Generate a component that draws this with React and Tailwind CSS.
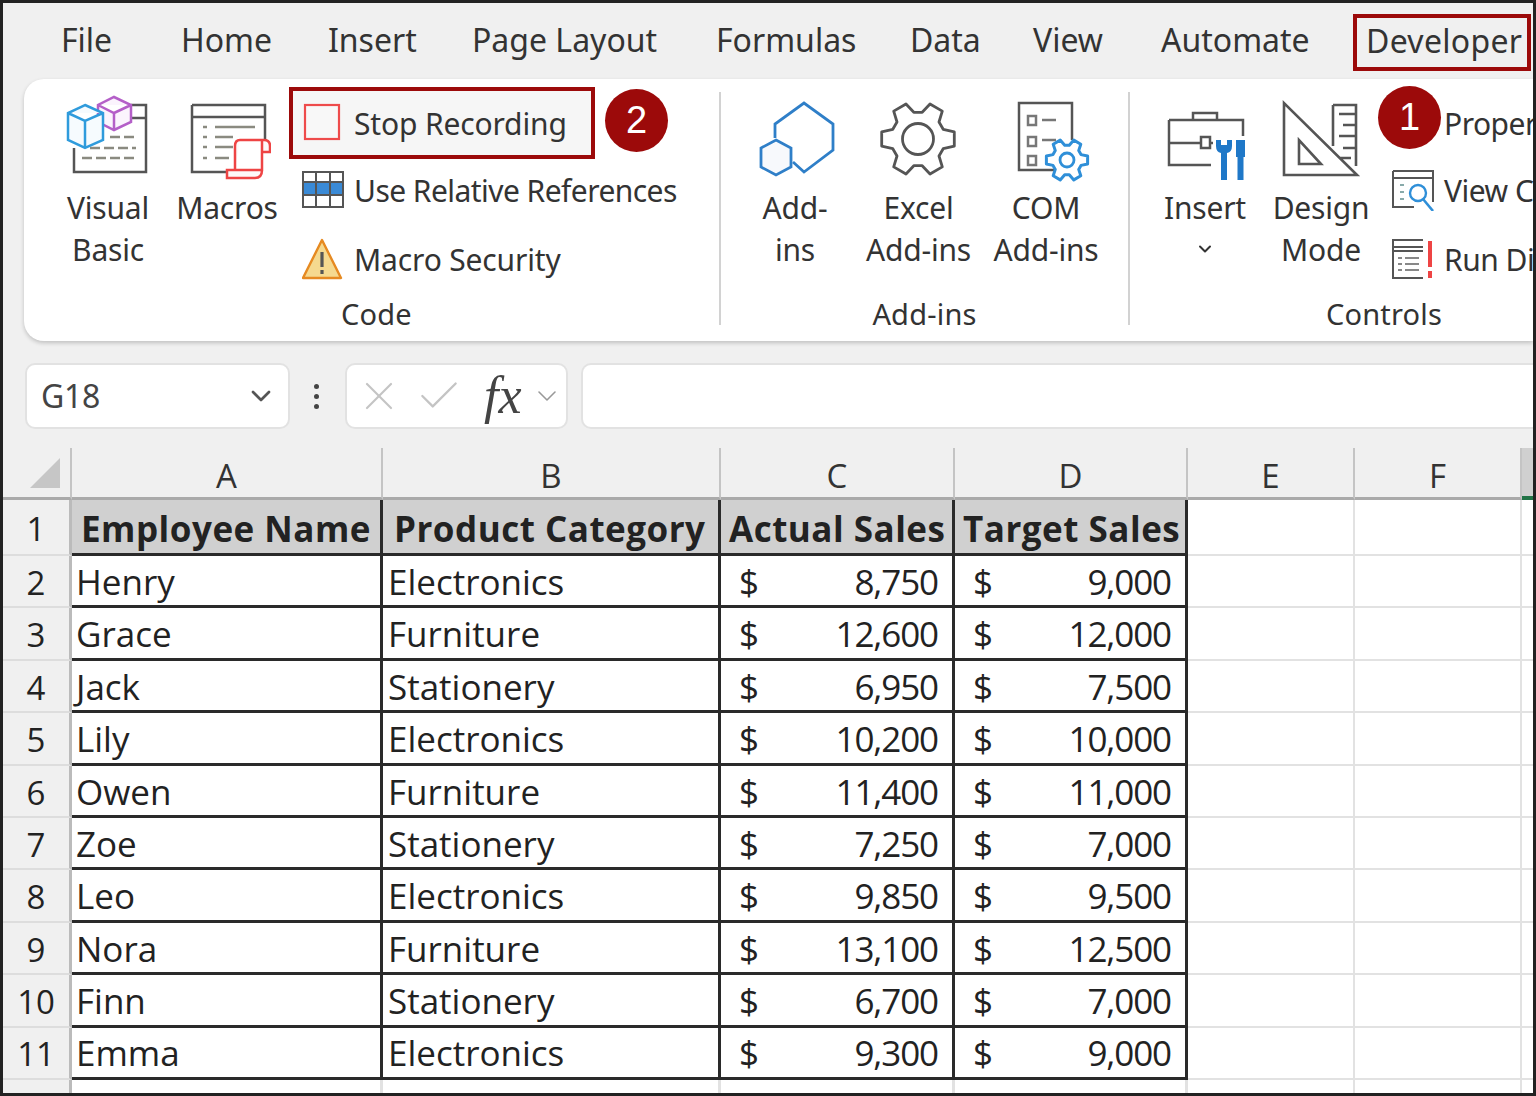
import React from 'react';
import { ChevronDown, X, Check } from 'lucide-react';

const tabs = [
  ['File', 'w-[120px]'], ['Home', 'w-[147px]'], ['Insert', 'w-[144px]'], ['Page Layout', 'w-[244px]'],
  ['Formulas', 'w-[194px]'], ['Data', 'w-[123px]'], ['View', 'w-[128px]'], ['Automate', 'w-[192px]'],
];

const rows = [
  ['Henry', 'Electronics', '8,750', '9,000'],
  ['Grace', 'Furniture', '12,600', '12,000'],
  ['Jack', 'Stationery', '6,950', '7,500'],
  ['Lily', 'Electronics', '10,200', '10,000'],
  ['Owen', 'Furniture', '11,400', '11,000'],
  ['Zoe', 'Stationery', '7,250', '7,000'],
  ['Leo', 'Electronics', '9,850', '9,500'],
  ['Nora', 'Furniture', '13,100', '12,500'],
  ['Finn', 'Stationery', '6,700', '7,000'],
  ['Emma', 'Electronics', '9,300', '9,000'],
];

// six toothed cog, teeth at 30, 90, 150...
function gearPath(cx, cy, R, r) {
  let d = '';
  for (let k = 0; k < 6; k++) {
    const a = 30 + k * 60;
    [[a - 21, r], [a - 11, R], [a + 11, R], [a + 21, r]].forEach(([deg, rad], i) => {
      const t = (deg * Math.PI) / 180;
      const x = (cx + rad * Math.sin(t)).toFixed(1);
      const y = (cy - rad * Math.cos(t)).toFixed(1);
      d += `${k === 0 && i === 0 ? 'M' : 'L'}${x} ${y}`;
    });
  }
  return d + 'Z';
}

function Big({ w, icon, lines }) {
  return (
    <div className={`flex flex-col items-center ${w}`}>
      <div className="mt-[15px] mb-[5px] h-[88px] w-[88px]">{icon}</div>
      {lines.map((l, i) => (
        <div key={i} className="h-[42px] leading-[42px] whitespace-nowrap text-[30px] tracking-[-0.2px]">{l}</div>
      ))}
    </div>
  );
}

function Small({ icon, text, h, className = '' }) {
  return (
    <div className={`flex items-center gap-[10px] whitespace-nowrap ${h} ${className}`}>
      <div className="w-[42px] h-[42px] shrink-0">{icon}</div>
      <span>{text}</span>
    </div>
  );
}

const VisualBasicIcon = (
  <svg viewBox="0 0 88 88" className="w-full h-full" fill="none" strokeWidth="2.5">
    <path d="M10 54V78H82V11H67M67 24H82" stroke="#555" />
    <path d="M46 43H72M26 54H72M18 64H72" stroke="#8a8a80" strokeDasharray="10 4" />
    <path d="M50 3L67 11V28L50 36L34 28V11ZM34 11L50 19L67 11M50 19V36" stroke="#b45fc8" fill="#fbf4fd" />
    <path d="M21 11L39 19V46L21 54L4 46V19ZM4 19L21 27L39 19M21 27V54" stroke="#2f9bdc" fill="#f6fbfe" />
  </svg>
);

const MacrosIcon = (
  <svg viewBox="0 0 88 88" className="w-full h-full" fill="none" strokeWidth="2.5">
    <path d="M9 11H82V58M9 11V78H50M9 23H82" stroke="#555" />
    <path d="M20 33H24M32 33H72M20 43H24M32 43H50M20 53H24M32 53H50M20 64H24M32 64H46" stroke="#8a8a80" />
    <path d="M57 46H81Q87 46 87 52V58H79V46M57 46Q52 46 52 52V76M79 58V76H44V84H72Q79 84 79 76" stroke="#ee4444" fill="#fdf8f8" />
  </svg>
);

const AddinsIcon = (
  <svg viewBox="0 0 88 88" className="w-full h-full" fill="none" stroke="#2f7fc8" strokeWidth="2.8">
    <path d="M24 44V30L53 9L82 30V56L53 78L42 68" />
    <path d="M25 46L40 54V73L25 81L10 73V54Z" fill="#f7f9fc" />
  </svg>
);

const ExcelAddinIcon = (
  <svg viewBox="0 0 88 88" className="w-full h-full" fill="none" stroke="#555" strokeWidth="2.8">
    <path d={gearPath(43, 45, 37, 27)} strokeLinejoin="round" />
    <circle cx="43" cy="45" r="15.5" />
  </svg>
);

const ComIcon = (
  <svg viewBox="0 0 88 88" className="w-full h-full" fill="none" strokeWidth="2.5">
    <path d="M52 76H17V9H70V46" stroke="#555" />
    <path d="M26 22H34V31H26ZM26 43H34V52H26ZM26 62H34V71H26Z" stroke="#777" />
    <path d="M40 26H54M40 46H54" stroke="#777" />
    <path d={gearPath(65, 66, 21, 15)} fill="white" stroke="#2f8fd8" strokeWidth="3" strokeLinejoin="round" />
    <circle cx="65" cy="66" r="7" stroke="#2f8fd8" strokeWidth="2.8" />
  </svg>
);

const InsertIcon = (
  <svg viewBox="0 0 88 88" className="w-full h-full" fill="none" strokeWidth="2.5">
    <path d="M32 26V19H56V26M8 26H82V42M8 26V71H50M8 49H40M49 49H52M40 43H49V54H40Z" stroke="#555" />
    <path d="M55 46V52Q55 58 60 59V86H66V59Q71 58 71 52V46L66 46V51H60V46Z" fill="#1f78c8" />
    <path d="M75 46H84V63H75Z" fill="#1f78c8" />
    <path d="M79.5 60V86" stroke="#1f78c8" strokeWidth="6" />
  </svg>
);

const DesignIcon = (
  <svg viewBox="0 0 88 88" className="w-full h-full" fill="none" stroke="#555" strokeWidth="2.6">
    <path d="M7 9V81H80ZM22 46V70H44ZM56 11H79V72M56 11V52M62 20H79M66 31H79M62 42H79M66 54H79M62 64H74" />
  </svg>
);

const StopIcon = (
  <svg viewBox="0 0 42 42" className="w-full h-full">
    <rect x="3" y="3" width="34" height="34" fill="#f8f8f8" stroke="#ee4b4b" strokeWidth="2.2" />
  </svg>
);

const RelativeIcon = (
  <svg viewBox="0 0 42 42" className="w-full h-full" fill="none">
    <rect x="1" y="13" width="40" height="13" fill="#3a8ad6" />
    <path d="M1 3H41V38H1ZM1 13H41M1 26H41M14 3V38M28 3V38" stroke="#555" strokeWidth="2" />
  </svg>
);

const SecurityIcon = (
  <svg viewBox="0 0 42 42" className="w-full h-full">
    <path d="M20 2L39 40H1Z" fill="#f5d98f" stroke="#e68a22" strokeWidth="2.4" strokeLinejoin="round" />
    <path d="M20 14V29M20 32V36" stroke="#555" strokeWidth="3.2" />
  </svg>
);

const ViewCodeIcon = (
  <svg viewBox="0 0 42 42" className="w-full h-full" fill="none">
    <path d="M1 2H41V33M1 2V38H22M1 9H41" stroke="#555" strokeWidth="2" />
    <path d="M8 16H12M8 23H12M8 30H12" stroke="#8aa" strokeWidth="2" />
    <circle cx="26" cy="24" r="8" stroke="#2f8fd8" strokeWidth="2.4" fill="white" />
    <path d="M31 30L41 42" stroke="#2f8fd8" strokeWidth="2.6" />
  </svg>
);

const RunDialogIcon = (
  <svg viewBox="0 0 42 42" className="w-full h-full" fill="none">
    <path d="M31 2H1V40H31M1 9H31M1 13H31" stroke="#555" strokeWidth="2" />
    <path d="M6 20H10M13 20H27M6 26H10M13 26H27M6 32H10M13 32H27" stroke="#888" strokeWidth="2" />
    <path d="M38 3V29M38 33V40" stroke="#ee4444" strokeWidth="4" />
  </svg>
);

function Separator() {
  return <div className="w-[2px] h-[233px] mt-[13px] bg-[#d2d2d2] shrink-0" />;
}

function GroupLabel({ children, className = '' }) {
  return <div className={`h-[40px] leading-[40px] text-center text-[29px] tracking-[0.2px] ${className}`}>{children}</div>;
}

export default function App() {
  return (
    <div className="relative w-[1536px] h-[1096px] overflow-hidden box-border border-[3px] border-[#222] bg-[#f0f0f0] text-[#333] font-['Noto_Sans','Open_Sans',sans-serif]">
      {/* tabs */}
      <div className="flex h-[76px] items-start pl-[58px] text-[32px]">
        {tabs.map(([t, w]) => (
          <div key={t} className={`${w} h-[76px] leading-[74px] whitespace-nowrap`}>{t}</div>
        ))}
        <div className="mt-[11px] w-[178px] h-[57px] box-border border-[4px] border-[#9c0a0a] pl-[9px] leading-[46px] tracking-[0.3px] whitespace-nowrap overflow-hidden">Developer</div>
      </div>

      {/* ribbon */}
      <div className="ml-[21px] h-[262px] flex rounded-l-[20px] bg-white shadow-[0_2px_4px_rgba(0,0,0,0.2)] text-[30px] tracking-[-0.5px] overflow-hidden">
        <div className="w-[695px] shrink-0 flex flex-col">
          <div className="flex flex-1 pl-[24px] min-h-0">
            <Big w="w-[120px]" icon={VisualBasicIcon} lines={['Visual', 'Basic']} />
            <Big w="w-[118px]" icon={MacrosIcon} lines={['Macros']} />
            <div className="pt-[8px] ml-[3px]">
              <Small icon={StopIcon} text="Stop Recording" h="h-[72px]" className="w-[306px] box-border border-[4px] border-[#9c0a0a] bg-[#f6f6f6] pl-[9px] tracking-[-0.15px]" />
              <Small icon={RelativeIcon} text="Use Relative References" h="h-[62px]" className="pl-[13px] tracking-[-0.55px]" />
              <Small icon={SecurityIcon} text="Macro Security" h="h-[76px]" className="pl-[13px] tracking-[-0.15px]" />
            </div>
          </div>
          <GroupLabel className="pl-[10px] mb-[7px]">Code</GroupLabel>
        </div>
        <Separator />
        <div className="w-[407px] shrink-0 flex flex-col">
          <div className="flex flex-1 pl-[14px] min-h-0">
            <Big w="w-[120px]" icon={AddinsIcon} lines={['Add-', 'ins']} />
            <Big w="w-[127px]" icon={ExcelAddinIcon} lines={['Excel', 'Add-ins']} />
            <Big w="w-[128px]" icon={ComIcon} lines={['COM', 'Add-ins']} />
          </div>
          <GroupLabel className="mb-[7px]">Add-ins</GroupLabel>
        </div>
        <Separator />
        <div className="w-[508px] shrink-0 flex flex-col">
          <div className="flex flex-1 pl-[17px] min-h-0">
            <Big
              w="w-[116px]"
              icon={InsertIcon}
              lines={['Insert', <ChevronDown key="c" size={20} strokeWidth={2.4} className="mt-[10px]" />]}
            />
            <Big w="w-[116px]" icon={DesignIcon} lines={['Design', 'Mode']} />
            <div className="pt-[8px]">
              <Small icon={<svg viewBox="0 0 42 42" />} text="Properties" h="h-[72px]" className="pl-[13px]" />
              <Small icon={ViewCodeIcon} text="View Code" h="h-[62px]" className="pl-[13px]" />
              <Small icon={RunDialogIcon} text="Run Dialog" h="h-[76px]" className="pl-[13px]" />
            </div>
          </div>
          <GroupLabel className="mb-[7px]">Controls</GroupLabel>
        </div>
      </div>

      {/* formula bar */}
      <div className="flex items-center h-[66px] mt-[22px] pl-[22px] text-[#444]">
        <div className="w-[265px] h-[66px] box-border flex items-center justify-between pl-[14px] pr-[11px] rounded-[10px] bg-white border-2 border-[#e2e2e2] text-[32px] tracking-[-0.3px]">
          G18
          <ChevronDown size={32} strokeWidth={2} color="#555" />
        </div>
        <div className="w-[55px] flex flex-col items-center gap-[5px] pr-[2px]">
          <span className="w-[5px] h-[5px] bg-[#444] rounded-full" />
          <span className="w-[5px] h-[5px] bg-[#444] rounded-full" />
          <span className="w-[5px] h-[5px] bg-[#444] rounded-full" />
        </div>
        <div className="w-[223px] h-[66px] box-border flex items-center pl-[8px] rounded-[10px] bg-white border-2 border-[#e2e2e2]">
          <X size={48} strokeWidth={1.1} color="#c4c4c4" />
          <Check size={50} strokeWidth={1.1} color="#c4c4c4" className="ml-[11px]" />
          <span className="ml-[20px] text-[52px] leading-none italic font-['Liberation_Serif',serif] text-[#444]">fx</span>
          <ChevronDown size={32} strokeWidth={1.2} color="#999" className="ml-[9px]" />
        </div>
        <div className="flex-1 h-[66px] ml-[13px] rounded-l-[10px] bg-white border-2 border-r-0 border-[#e2e2e2]" />
      </div>

      {/* sheet */}
      <div className="mt-[19px] grid grid-cols-[69px_311px_338px_234px_233px_167px_167px_13px] grid-rows-[52px_56px_repeat(10,52.4px)_13px] font-['Open_Sans','Noto_Sans',sans-serif] text-[35px] text-[#222]">
        <div className="flex items-end justify-end pr-[10px] pb-[9px] border-r-2 border-r-[#c4c4c4] border-b-[3px] border-b-[#aaa]">
          <svg viewBox="0 0 30 30" className="w-[30px] h-[30px]"><path d="M30 0V30H0Z" fill="#c6c6c6" /></svg>
        </div>
        {['A', 'B', 'C', 'D', 'E', 'F'].map((c) => (
          <div key={c} className="flex items-end justify-center pt-[5px] border-r-2 border-r-[#c4c4c4] border-b-[3px] border-b-[#aaa] text-[#333] text-[33px] leading-[42px]">{c}</div>
        ))}
        <div className="bg-[#d0d0d0] border-b-[4px] border-b-[#217346]" />

        <div className="flex items-center justify-center pt-[3px] text-[33px] border-r-[3px] border-r-[#bbb] border-b-2 border-b-[#ddd]">1</div>
        {['Employee Name', 'Product Category', 'Actual Sales', 'Target Sales'].map((h, i) => (
          <div
            key={h}
            className={`flex items-center pt-[6px] bg-[#d0d0d0] font-bold tracking-[0.5px] whitespace-nowrap border-r-[3px] border-b-[3px] border-[#2a2a2a] ${i === 0 ? 'pl-[9px]' : i === 1 ? 'pl-[11px]' : 'pl-[8px]'}`}
          >
            {h}
          </div>
        ))}
        <div className="bg-white border-r-2 border-b-2 border-[#e2e2e2]" />
        <div className="bg-white border-r-2 border-b-2 border-[#e2e2e2]" />
        <div className="bg-white border-b-2 border-[#e2e2e2]" />

        {rows.map((r, i) => (
          <React.Fragment key={r[0]}>
            <div className="flex items-center justify-center pt-[3px] text-[33px] border-r-[3px] border-r-[#bbb] border-b-2 border-b-[#ddd]">{i + 2}</div>
            <div className="flex items-center pt-[3px] pl-[4px] bg-white border-r-[3px] border-b-[3px] border-[#2a2a2a]">{r[0]}</div>
            <div className="flex items-center pt-[3px] pl-[5px] bg-white border-r-[3px] border-b-[3px] border-[#2a2a2a]">{r[1]}</div>
            <div className="flex items-center justify-between pt-[3px] pl-[18px] pr-[14px] tracking-[-1.1px] bg-white border-r-[3px] border-b-[3px] border-[#2a2a2a]">
              <span>$</span><span>{r[2]}</span>
            </div>
            <div className="flex items-center justify-between pt-[3px] pl-[18px] pr-[14px] tracking-[-1.1px] bg-white border-r-[3px] border-b-[3px] border-[#2a2a2a]">
              <span>$</span><span>{r[3]}</span>
            </div>
            <div className="bg-white border-r-2 border-b-2 border-[#e2e2e2]" />
            <div className="bg-white border-r-2 border-b-2 border-[#e2e2e2]" />
            <div className="bg-white border-b-2 border-[#e2e2e2]" />
          </React.Fragment>
        ))}

        <div className="border-r-[3px] border-r-[#bbb]" />
        <div className="bg-white border-r-[3px] border-[#e2e2e2]" />
        <div className="bg-white border-r-[3px] border-[#e2e2e2]" />
        <div className="bg-white border-r-[3px] border-[#e2e2e2]" />
        <div className="bg-white border-r-[3px] border-[#e2e2e2]" />
        <div className="bg-white border-r-2 border-[#e2e2e2]" />
        <div className="bg-white border-r-2 border-[#e2e2e2]" />
        <div className="bg-white" />
      </div>

      {/* numbered callouts */}
      <div className="absolute left-[1375px] top-[83px] w-[63px] h-[63px] rounded-full bg-[#9c0a0a] flex items-center justify-center text-white text-[38px] font-['Liberation_Sans',sans-serif]">1</div>
      <div className="absolute left-[602px] top-[86px] w-[63px] h-[63px] rounded-full bg-[#9c0a0a] flex items-center justify-center text-white text-[38px] font-['Liberation_Sans',sans-serif]">2</div>
    </div>
  );
}
